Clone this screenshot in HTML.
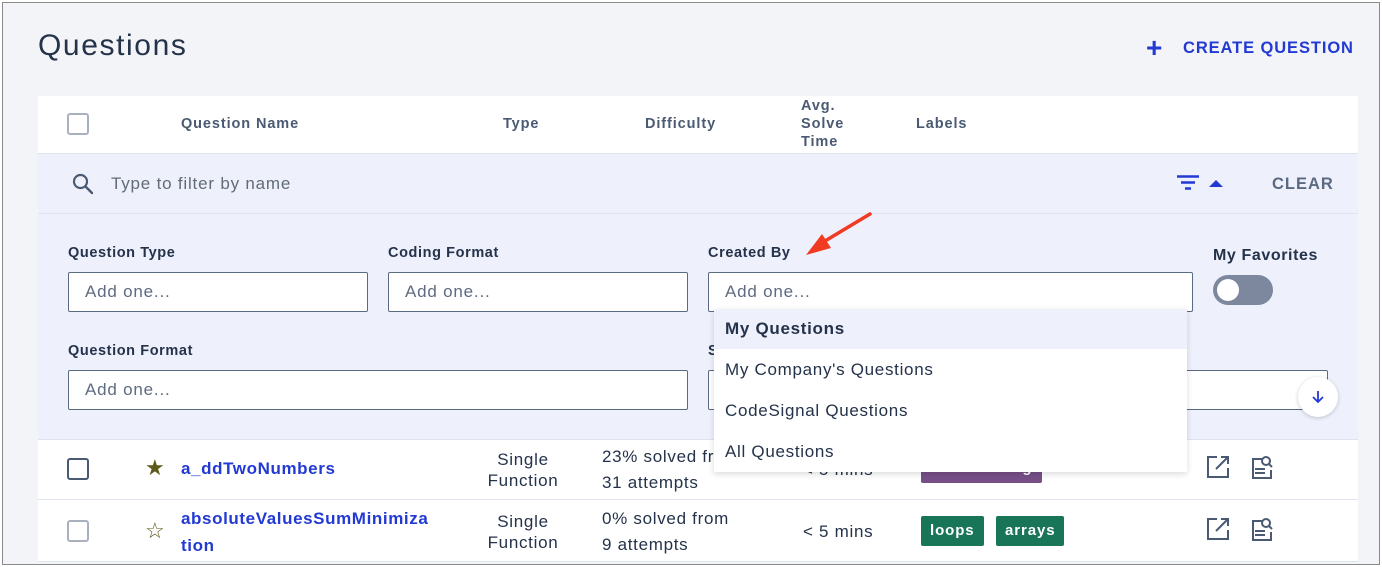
<!DOCTYPE html>
<html><head><style>
*{box-sizing:border-box;margin:0;padding:0}
body{width:1382px;height:567px;background:#fff;font-family:"Liberation Sans",sans-serif;position:relative;overflow:hidden;color:#24324a;letter-spacing:.5px}
.frame{position:absolute;left:2px;top:2px;width:1378px;height:563px;border:1px solid #8a8a8a;background:#f3f4f7}
.a{position:absolute}
.b{font-weight:bold}
.hd{font-size:14.5px;font-weight:bold;color:#4a5a72;letter-spacing:.9px}
.lbl{font-size:14.5px;font-weight:bold;color:#24324a;letter-spacing:.6px}
.inp{position:absolute;height:40px;background:#fff;border:1px solid #5a6a82;border-radius:2px;font-size:17px;color:#5e6b80;padding:9px 16px;letter-spacing:.8px}
.cb{position:absolute;width:22px;height:22px;border:2px solid #a9b1bf;border-radius:3px;background:#fff}
.lnk{color:#2239d4;font-weight:bold;font-size:17px;letter-spacing:.6px}
.t{font-size:17px;color:#24324a;letter-spacing:.7px}
.tag{position:absolute;height:30px;color:#fff;font-weight:bold;font-size:15px;padding:6px 9px;border-radius:2px;letter-spacing:.9px}
</style></head><body>
<div class="frame"></div>
<div class="a" style="left:38px;top:29px;font-size:30px;color:#24324a;letter-spacing:1.6px">Questions</div>
<div class="a" style="left:1146px;top:34px;color:#2239d4;font-size:28px;font-weight:bold;line-height:28px">+</div>
<div class="a b" style="left:1183px;top:39px;color:#2239d4;font-size:16.5px;letter-spacing:.9px">CREATE QUESTION</div>

<div class="a" style="left:38px;top:96px;width:1320px;height:466px;background:#fff"></div>
<div class="cb" style="left:67px;top:113px"></div>
<div class="a hd" style="left:181px;top:116px">Question Name</div>
<div class="a hd" style="left:503px;top:116px">Type</div>
<div class="a hd" style="left:645px;top:116px">Difficulty</div>
<div class="a hd" style="left:801px;top:97px;line-height:18px">Avg.<br>Solve<br>Time</div>
<div class="a hd" style="left:916px;top:116px">Labels</div>

<div class="a" style="left:38px;top:153px;width:1320px;height:286px;background:#eef1fc;border-top:1px solid #dfe3f0"></div>
<div class="a" style="left:38px;top:213px;width:1320px;height:1px;background:#dfe3f2"></div>
<svg class="a" style="left:71px;top:172px" width="24" height="24" viewBox="0 0 24 24"><circle cx="9.5" cy="9.5" r="6.5" fill="none" stroke="#4a5a72" stroke-width="2.2"/><path d="M14.5 14.5L21 21" stroke="#4a5a72" stroke-width="2.4" stroke-linecap="round"/></svg>
<div class="a" style="left:111px;top:174px;font-size:17px;color:#626b78;letter-spacing:.8px">Type to filter by name</div>
<svg class="a" style="left:1176px;top:175px" width="48" height="16"><path d="M1 1.5h22M5 7.5h14M9 13.5h6" stroke="#2239d4" stroke-width="2.4"/><path d="M33 12l7-7 7 7z" fill="#2239d4"/></svg>
<div class="a b" style="left:1272px;top:175px;font-size:16.5px;color:#5a6a82;letter-spacing:1px">CLEAR</div>

<div class="a lbl" style="left:68px;top:245px">Question Type</div>
<div class="inp" style="left:68px;top:272px;width:300px">Add one...</div>
<div class="a lbl" style="left:388px;top:245px">Coding Format</div>
<div class="inp" style="left:388px;top:272px;width:300px">Add one...</div>
<div class="a lbl" style="left:708px;top:245px">Created By</div>
<div class="inp" style="left:708px;top:272px;width:485px">Add one...</div>
<div class="a lbl" style="left:1213px;top:247px;font-size:16px">My Favorites</div>
<div class="a" style="left:1213px;top:275px;width:60px;height:30px;border-radius:15px;background:#7d879e"></div>
<div class="a" style="left:1217px;top:279px;width:22px;height:22px;border-radius:11px;background:#fff"></div>
<svg class="a" style="left:800px;top:210px" width="75" height="50"><path d="M70 4L20 34" stroke="#f03a22" stroke-width="3.5" stroke-linecap="round"/><path d="M6 45L22 24L31 38z" fill="#f03a22"/></svg>

<div class="a lbl" style="left:68px;top:343px">Question Format</div>
<div class="a lbl" style="left:708px;top:343px">S</div>
<div class="inp" style="left:68px;top:370px;width:620px">Add one...</div>
<div class="inp" style="left:708px;top:370px;width:620px"></div>
<div class="a" style="left:1298px;top:377px;width:40px;height:40px;border-radius:20px;background:#fff;box-shadow:0 1px 4px rgba(0,0,0,.2)"></div>
<svg class="a" style="left:1310px;top:389px" width="16" height="16"><path d="M8 2v11M3 8l5 5 5-5" stroke="#2239d4" stroke-width="1.8" fill="none"/></svg>

<div class="a" style="left:38px;top:439px;width:1320px;height:1px;background:#dfe3f0"></div>
<div class="a" style="left:38px;top:499px;width:1320px;height:1px;background:#dfe3f0"></div>
<div class="a" style="left:38px;top:561px;width:1320px;height:1px;background:#dfe3f0"></div>

<div class="cb" style="left:67px;top:458px;border-color:#4a5a72"></div>
<div class="a" style="left:145px;top:456px;font-size:22px;color:#5e5a1a;line-height:24px">★</div>
<div class="a lnk" style="left:181px;top:459px">a_ddTwoNumbers</div>
<div class="a t" style="left:478px;top:449px;text-align:center;width:90px;line-height:21px">Single<br>Function</div>
<div class="a t" style="left:602px;top:444px;line-height:26px">23% solved from<br>31 attempts</div>
<div class="a t" style="left:803px;top:460px">&lt; 5 mins</div>
<div class="tag" style="left:921px;top:453px;background:#764f87">basic coding</div>

<div class="cb" style="left:67px;top:520px"></div>
<div class="a" style="left:145px;top:519px;font-size:22px;color:#5e5a1a;line-height:24px">☆</div>
<div class="a lnk" style="left:181px;top:505px;line-height:27px">absoluteValuesSumMinimiza<br>tion</div>
<div class="a t" style="left:478px;top:511px;text-align:center;width:90px;line-height:21px">Single<br>Function</div>
<div class="a t" style="left:602px;top:506px;line-height:26px">0% solved from<br>9 attempts</div>
<div class="a t" style="left:803px;top:522px">&lt; 5 mins</div>
<div class="tag" style="left:921px;top:516px;background:#187558">loops</div>
<div class="tag" style="left:996px;top:516px;background:#187558">arrays</div>

<svg class="a" style="left:1206px;top:455px" width="80" height="90">
<g fill="none" stroke="#4a5a72" stroke-width="2"><path d="M11 2H2v20h20v-9M15 2h7v7M21 3l-11 11"/><path d="M56 4h-9v19h18v-8M49 14h10M49 18h10"/><circle cx="60" cy="6" r="4"/><path d="M63 9l3 3"/></g>
<g fill="none" stroke="#4a5a72" stroke-width="2" transform="translate(0,62)"><path d="M11 2H2v20h20v-9M15 2h7v7M21 3l-11 11"/><path d="M56 4h-9v19h18v-8M49 14h10M49 18h10"/><circle cx="60" cy="6" r="4"/><path d="M63 9l3 3"/></g>
</svg>

<div class="a" style="left:714px;top:309px;width:473px;height:163px;background:#fff;box-shadow:0 2px 6px rgba(0,0,0,.15)"></div>
<div class="a" style="left:714px;top:309px;width:473px;height:40px;background:#eef1fc"></div>
<div class="a" style="left:725px;top:319px;font-size:17px;font-weight:bold;color:#24324a;letter-spacing:.7px">My Questions</div>
<div class="a t" style="left:725px;top:360px">My Company's Questions</div>
<div class="a t" style="left:725px;top:401px">CodeSignal Questions</div>
<div class="a t" style="left:725px;top:442px">All Questions</div>
</body></html>
